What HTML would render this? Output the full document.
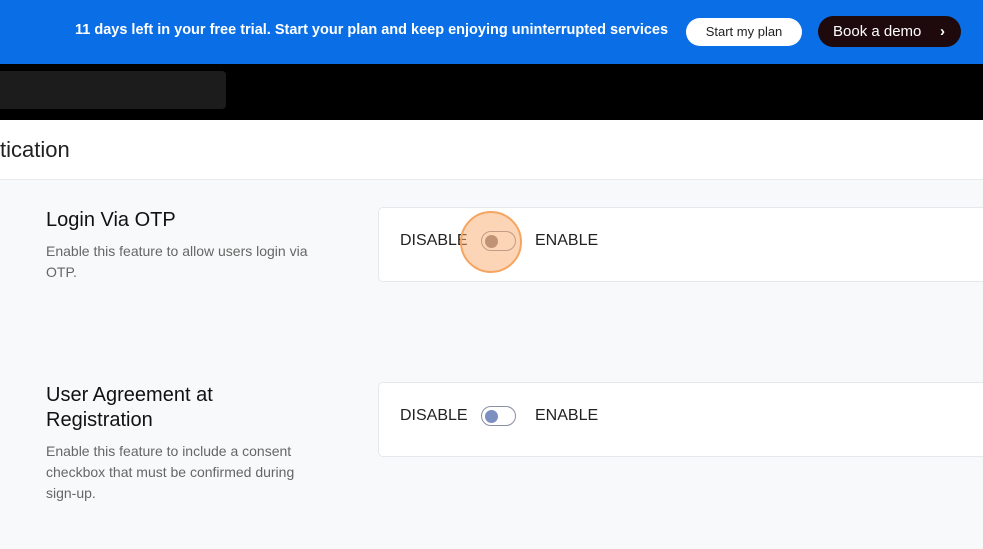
<!DOCTYPE html>
<html><head><meta charset="utf-8"><style>
*{margin:0;padding:0;box-sizing:border-box}
body{width:983px;height:549px;overflow:hidden;background:#f8f9fa;font-family:"Liberation Sans",sans-serif;position:relative;color:#222}
.top{position:absolute;left:0;top:0;width:983px;height:64px;background:#0a6fe6}
.top .msg{position:absolute;left:75px;top:22px;color:#fff;font-weight:bold;font-size:14.5px}
.b1{position:absolute;left:686px;top:18px;width:116px;height:28px;background:#fff;border-radius:14px;font-size:13px;color:#222;text-align:center;line-height:28px}
.b2{position:absolute;left:818px;top:16px;width:143px;height:31px;background:#1e0a0c;border-radius:16px;font-size:15px;color:#fff;line-height:31px;padding-left:15px}
.b2 span{position:absolute;right:16px;top:0;font-weight:bold}
.bar{position:absolute;left:0;top:64px;width:983px;height:56px;background:#000}
.bar div{position:absolute;left:0;top:7px;width:226px;height:38px;background:#1c1c1c;border-radius:0 4px 4px 0}
.head{position:absolute;left:0;top:120px;width:983px;height:60px;background:#fff;border-bottom:1px solid #e8eaed}
.head span{position:absolute;left:0;top:17px;font-size:22px;color:#222}
h3{position:absolute;left:46px;font-size:20px;font-weight:normal;color:#111;line-height:25px}
p{position:absolute;left:46px;font-size:14px;color:#666;line-height:21px;white-space:nowrap}
.card{position:absolute;left:378px;width:620px;height:75px;background:#fff;border:1px solid #e6e8eb;border-radius:5px}
.card .d{position:absolute;left:21px;top:24px;font-size:16px;color:#222;z-index:2}
.card .e{position:absolute;left:156px;top:24px;font-size:16px;color:#222}
.tg{position:absolute;left:102px;top:23px;width:35px;height:20px;border:1px solid #8a8fa5;border-radius:10px;background:#fff;z-index:2}
.tg i{position:absolute;left:3px;top:3px;width:13px;height:13px;border-radius:50%}
.halo{position:absolute;left:81px;top:3px;width:62px;height:62px;border-radius:50%;background:rgba(250,170,110,.5);border:2px solid #f5a560;z-index:3}
</style></head><body>
<div class="top"><div class="msg">11 days left in your free trial. Start your plan and keep enjoying uninterrupted services</div>
<div class="b1">Start my plan</div><div class="b2">Book a demo<span>&#8250;</span></div></div>
<div class="bar"><div></div></div>
<div class="head"><span>tication</span></div>
<h3 style="top:208px">Login Via OTP</h3>
<p style="top:241px">Enable this feature to allow users login via<br>OTP.</p>
<div class="card" style="top:207px"><span class="d">DISABLE</span><div class="tg"><i style="background:#8a7a80"></i></div><div class="halo"></div><span class="e">ENABLE</span></div>
<h3 style="top:383px">User Agreement at<br>Registration</h3>
<p style="top:441px">Enable this feature to include a consent<br>checkbox that must be confirmed during<br>sign-up.</p>
<div class="card" style="top:382px"><span class="d">DISABLE</span><div class="tg"><i style="background:#7b8fc0"></i></div><span class="e">ENABLE</span></div>
</body></html>
